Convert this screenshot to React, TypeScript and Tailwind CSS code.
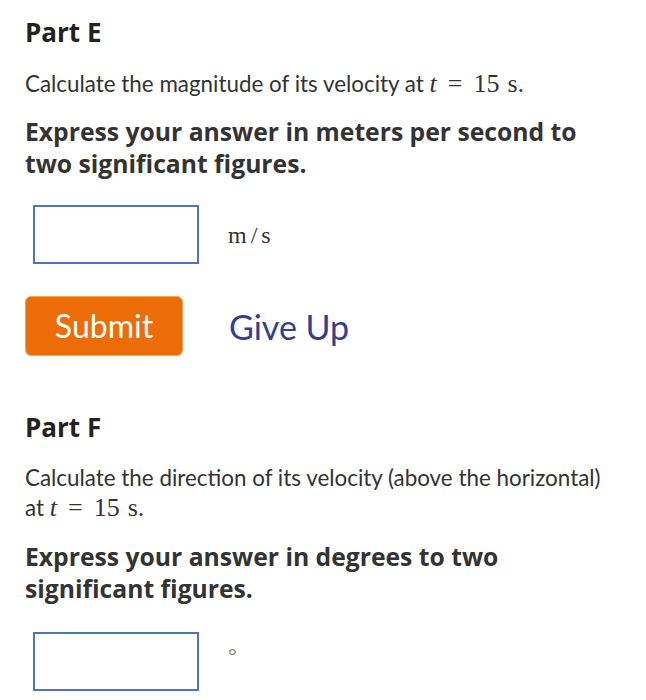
export default function App() {
  const body = "font-['Lato','Noto_Sans',sans-serif]";
  const head = "font-['Open_Sans','Noto_Sans',sans-serif]";
  const math = "font-['Liberation_Serif','DejaVu_Serif',serif]";

  const T15 = () => (
    <span className={`${math} text-[26px] leading-[30px] whitespace-nowrap`}>
      <i>t</i>
      <span className="mx-[11px]">=</span>15<span className="ml-[8px]">s.</span>
    </span>
  );

  return (
    <div className="min-h-screen bg-white pl-[25px] pr-[36px] text-[#222]">
      {/* Part E */}
      <h2 className={`${head} pt-[14px] text-[26px] font-bold leading-[36px]`}>Part E</h2>
      <p className={`${body} mt-[19px] text-[22.4px] leading-[30px] text-[#333]`}>
        Calculate the magnitude of its velocity at <T15 />
      </p>
      <p className={`${head} mt-[17px] text-[24.7px] font-bold leading-[32px] text-[#333]`}>
        Express your answer in meters per second to two significant figures.
      </p>

      <div className="mt-[25px] flex items-center gap-[29px] pl-[8px]">
        <div className="h-[59px] w-[166px] border-2 border-[#4e74bb] bg-white" />
        <span className={`${math} text-[24px] text-[#333]`}>
          m<span className="px-[4px]">/</span>s
        </span>
      </div>

      <div className="mt-[32px] flex items-center gap-[46px]">
        <button
          className={`${body} h-[60px] w-[158px] rounded-[6px] border border-[#f3a35c] bg-[#ec6c08] text-[32px] text-white`}
        >
          Submit
        </button>
        <span className={`${body} text-[34px] text-[#34408c]`}>Give Up</span>
      </div>

      {/* Part F */}
      <h2 className={`${head} mt-[53px] text-[26px] font-bold leading-[36px]`}>Part F</h2>
      <p className={`${body} mt-[18px] text-[22.4px] leading-[30px] text-[#333]`}>
        <span>Calculate the direction of its velocity (above the horizontal)</span>{" "}
        <span className="whitespace-nowrap">
          at <T15 />
        </span>
      </p>
      <p className={`${head} mt-[18px] text-[24.7px] font-bold leading-[32px] text-[#333]`}>
        Express your answer in degrees to two significant figures.
      </p>

      <div className="mt-[27px] flex items-start gap-[29px] pl-[8px]">
        <div className="h-[59px] w-[166px] border-2 border-[#4e74bb] bg-white" />
        <span className={`${math} mt-[13px] text-[22px] leading-none text-[#777]`}>°</span>
      </div>
    </div>
  );
}
